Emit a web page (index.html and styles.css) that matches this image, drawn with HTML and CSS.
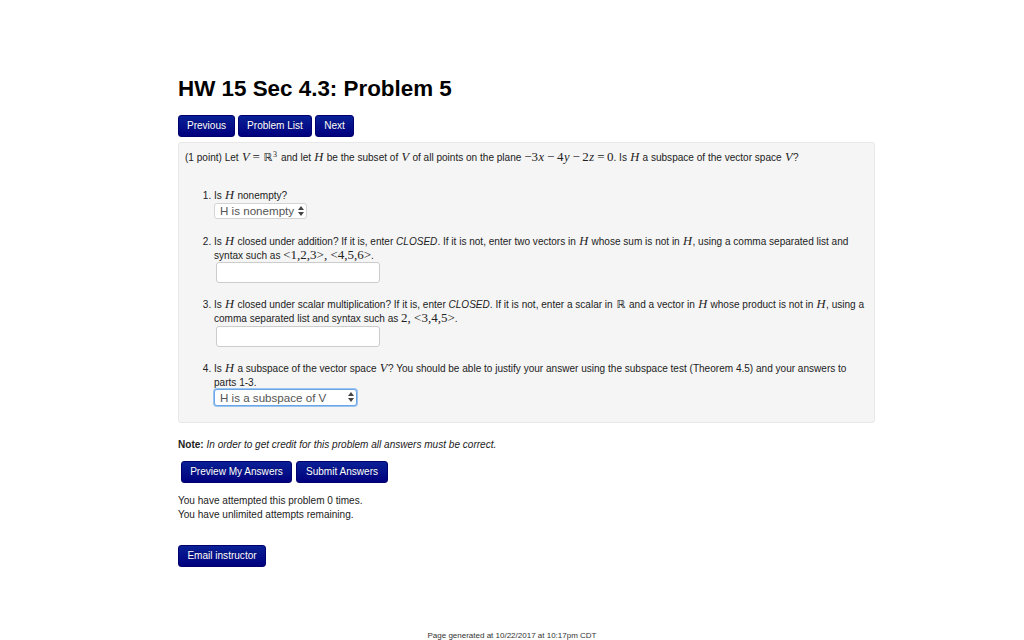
FILE: index.html
```html
<!DOCTYPE html>
<html lang="en">
<head>
    <meta charset="UTF-8">
    <title>HW 15 Sec 4.3: Problem 5</title>
    <link rel="stylesheet" href="styles.css">
</head>
<body>
    <div class="page">
        <h1 class="title">HW 15 Sec 4.3: Problem 5</h1>

        <div class="nav">
            <a class="btn btn-prev">Previous</a>
            <a class="btn btn-list">Problem List</a>
            <a class="btn btn-next">Next</a>
        </div>

        <div class="well">
            <p class="intro">(1 point) Let <span class="m">V</span><span class="n op">=</span><span class="bb">ℝ</span><sup class="n">3</sup> and let <span class="m">H</span> be the subset of <span class="m">V</span> of all points on the plane <span class="n">−3</span><span class="m">x</span><span class="n op">−</span><span class="n">4</span><span class="m">y</span><span class="n op">−</span><span class="n">2</span><span class="m">z</span><span class="n op">=</span><span class="n">0</span>. Is <span class="m">H</span> a subspace of the vector space <span class="m">V</span>?</p>

            <ol class="parts">
                <li class="part part-1">
                    Is <span class="m">H</span> nonempty?
                    <div class="select-wrap select-short">
                        <select class="select"><option>H is nonempty</option></select>
                        <svg class="arrows" width="6" height="10" viewBox="0 0 6 10"><path d="M3 0L6 4H0zM3 10L0 6H6z"/></svg>
                    </div>
                </li>
                <li class="part part-2">
                    Is <span class="m">H</span> closed under addition? If it is, enter <em>CLOSED</em>. If it is not, enter two vectors in <span class="m">H</span> whose sum is not in <span class="m">H</span>, using a comma separated list and syntax such as <span class="n">&lt;1,2,3&gt;, &lt;4,5,6&gt;</span>.
                    <input type="text" class="answer answer-2">
                </li>
                <li class="part part-3">
                    Is <span class="m">H</span> closed under scalar multiplication? If it is, enter <em>CLOSED</em>. If it is not, enter a scalar in <span class="bb">ℝ</span> and a vector in <span class="m">H</span> whose product is not in <span class="m">H</span>, using a comma separated list and syntax such as <span class="n">2, &lt;3,4,5&gt;</span>.
                    <input type="text" class="answer">
                </li>
                <li class="part part-4">
                    Is <span class="m">H</span> a subspace of the vector space <span class="m">V</span>? You should be able to justify your answer using the subspace test (Theorem 4.5) and your answers to parts 1-3.
                    <div class="select-wrap select-long">
                        <select class="select select-focus"><option>H is a subspace of V</option></select>
                        <svg class="arrows" width="6" height="10" viewBox="0 0 6 10"><path d="M3 0L6 4H0zM3 10L0 6H6z"/></svg>
                    </div>
                </li>
            </ol>
        </div>

        <p class="note"><strong>Note:</strong> <em>In order to get credit for this problem all answers must be correct.</em></p>

        <div class="actions">
            <a class="btn btn-preview">Preview My Answers</a>
            <a class="btn btn-submit">Submit Answers</a>
        </div>

        <p class="attempts">You have attempted this problem 0 times.<br>You have unlimited attempts remaining.</p>

        <a class="btn btn-email">Email instructor</a>
    </div>

    <div class="footer">Page generated at 10/22/2017 at 10:17pm CDT</div>
</body>
</html>
```

FILE: styles.css
```css
body {
    margin: 0;
    height: 640px;
    overflow: hidden;
    background-color: #fff;
    color: #222;
    font-family: "Liberation Sans", Arial, sans-serif;
    font-size: 10.06px;
    line-height: 14px;
}

.page {
    width: 697px;
    margin-left: 178px;
    padding-top: 75px;
}

.title {
    margin: 0;
    font-size: 22.4px;
    line-height: 28px;
    color: #000;
}

.nav {
    display: flex;
    gap: 3px;
    margin-top: 12px;
}

.btn {
    display: block;
    box-sizing: border-box;
    height: 22px;
    line-height: 20px;
    text-align: center;
    color: #fff;
    border: 1px solid #00006e;
    border-radius: 3px;
    background: linear-gradient(#0a2196, #00007d);
    text-shadow: 0 -1px 0 rgba(0, 0, 0, 0.25);
}

.btn-prev { width: 57px; }
.btn-list { width: 74px; }
.btn-next { width: 39px; }
.btn-preview { width: 111px; }
.btn-submit { width: 92px; }
.btn-email { width: 88px; margin-top: 23px; }

.well {
    box-sizing: border-box;
    height: 281px;
    margin-top: 5px;
    padding: 8px 6px 0;
    background-color: #f5f5f5;
    border: 1px solid #e8e8e8;
    border-radius: 3px;
}

.intro {
    margin: 0;
}

.parts {
    margin: 0;
    padding: 0 2px 0 29px;
}

.part-1 { margin-top: 24px; }
.part-2 { margin-top: 16px; }
.part-3 { margin-top: 15px; }
.part-4 { margin-top: 15px; }

.m {
    padding: 0 0.5px;
    font-family: "Liberation Serif", serif;
    font-style: italic;
    font-size: 12.5px;
    line-height: 0;
}

.n {
    font-family: "Liberation Serif", serif;
    font-size: 13px;
    line-height: 0;
}

.op {
    margin: 0 2.5px;
}

.bb {
    padding: 0 1px;
    font-family: "DejaVu Sans", sans-serif;
    font-size: 11px;
    line-height: 0;
}

sup.n {
    padding-right: 1px;
    font-size: 8px;
    vertical-align: 4px;
}

.select-wrap {
    position: relative;
}

.select-short { width: 93px; }
.select-long { width: 143px; margin-top: -1px; }

.select {
    display: block;
    box-sizing: border-box;
    width: 100%;
    height: 16px;
    margin: 0;
    padding: 0 0 1px 5px;
    appearance: none;
    background-color: #fff;
    border: 1px solid #d4d4d4;
    border-radius: 3px;
    color: #555;
    font-family: "Liberation Sans", Arial, sans-serif;
    font-size: 11.6px;
}

.select-focus {
    height: 17px;
    border-color: #6aa5e8;
    box-shadow: 0 0 0 1px #9cc4f0;
}

.arrows {
    position: absolute;
    top: 3px;
    right: 3px;
    fill: #444;
}

.answer {
    display: block;
    box-sizing: border-box;
    width: 164px;
    height: 21px;
    margin: 0 0 0 2px;
    background-color: #fff;
    border: 1px solid #ccc;
    border-radius: 3px;
}

.answer-2 {
    margin-top: -1px;
}

.note {
    margin: 15px 0 0;
}

.actions {
    display: flex;
    gap: 4px;
    margin: 9px 0 0 3px;
}

.attempts {
    margin: 11px 0 0;
}

.footer {
    position: absolute;
    left: 0;
    right: 0;
    top: 629px;
    text-align: center;
    font-size: 8px;
    color: #333;
}
```
